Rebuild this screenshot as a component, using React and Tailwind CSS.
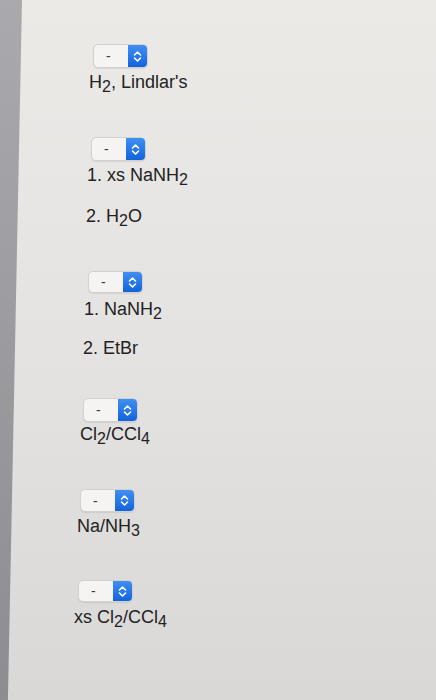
// Reagent picker worksheet: a stack of small dropdowns with the reagent text under each.

function Chevrons() {
  return (
    <svg width="9" height="13" viewBox="0 0 9 13" fill="none">
      <path d="M1.5 5 L4.5 2 L7.5 5" stroke="white" strokeWidth="1.6" strokeLinecap="round" strokeLinejoin="round" />
      <path d="M1.5 8 L4.5 11 L7.5 8" stroke="white" strokeWidth="1.6" strokeLinecap="round" strokeLinejoin="round" />
    </svg>
  );
}

function Picker({ className }) {
  return (
    <div className={`flex w-[55px] rounded-[5px] border border-[#d3d1ce] bg-[#f5f4f2] overflow-hidden shadow-[0_1px_1px_rgba(0,0,0,0.08)] ${className}`}>
      <div className="flex-1 flex items-center pl-[12px] text-[14px] text-[#3a3a3a]">-</div>
      <div className="w-[19px] flex items-center justify-center bg-gradient-to-b from-[#3f8ff3] to-[#1163dc]">
        <Chevrons />
      </div>
    </div>
  );
}

export default function App() {
  return (
    <div
      className="relative w-full h-[700px] overflow-hidden flex bg-gradient-to-b from-[#ebeae7] via-[#e4e3e1] to-[#d9d8d6] text-[#222222] text-[18px] leading-[20px]"
      style={{ fontFamily: '"Liberation Sans", Arial, sans-serif' }}
    >
      {/* dark bezel edge on the left */}
      <div className="w-[22px] shrink-0 h-full bg-gradient-to-b from-[#aaa9ad] to-[#8d8c91] [clip-path:polygon(0_0,100%_0,36%_100%,0_100%)]" />

      <div className="flex flex-col items-start pt-[44px]">
        {/* 1 */}
        <Picker className="h-[24px] ml-[71px]" />
        <p className="mt-[4px] ml-[67px]">H<sub className="text-[16px]">2</sub>, Lindlar's</p>

        {/* 2 */}
        <Picker className="h-[24px] mt-[45px] ml-[69px]" />
        <p className="mt-[4px] ml-[65px]">1. xs NaNH<sub className="text-[16px]">2</sub></p>
        <p className="mt-[21px] ml-[64px]">2. H<sub className="text-[16px]">2</sub>O</p>

        {/* 3 */}
        <Picker className="h-[22px] mt-[45px] ml-[66px]" />
        <p className="mt-[6px] ml-[62px]">1. NaNH<sub className="text-[16px]">2</sub></p>
        <p className="mt-[19px] ml-[61px]">2. EtBr</p>

        {/* 4 */}
        <Picker className="h-[24px] mt-[40px] ml-[61px]" />
        <p className="mt-[2px] ml-[58px]">Cl<sub className="text-[16px]">2</sub>/CCl<sub className="text-[16px]">4</sub></p>

        {/* 5 */}
        <Picker className="h-[23px] mt-[45px] ml-[58px]" />
        <p className="mt-[4px] ml-[55px]">Na/NH<sub className="text-[16px]">3</sub></p>

        {/* 6 */}
        <Picker className="h-[22px] mt-[44px] ml-[56px]" />
        <p className="mt-[5px] ml-[52px]">xs Cl<sub className="text-[16px]">2</sub>/CCl<sub className="text-[16px]">4</sub></p>
      </div>
    </div>
  );
}
